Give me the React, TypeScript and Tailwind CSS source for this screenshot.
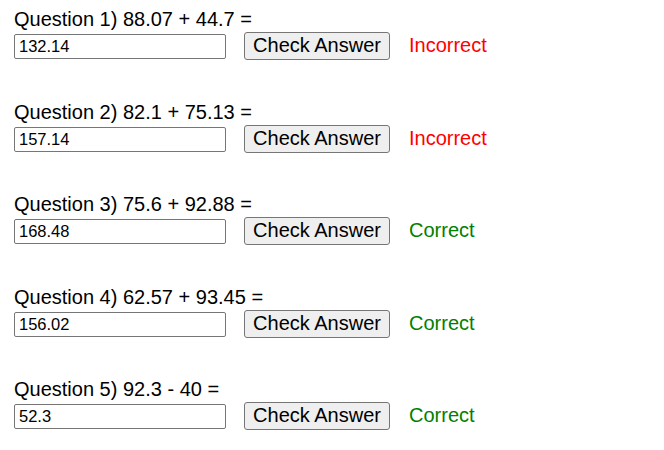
import React from "react";

const items = [
  { q: "Question 1) 88.07 + 44.7 =", a: "132.14", ok: false },
  { q: "Question 2) 82.1 + 75.13 =", a: "157.14", ok: false },
  { q: "Question 3) 75.6 + 92.88 =", a: "168.48", ok: true },
  { q: "Question 4) 62.57 + 93.45 =", a: "156.02", ok: true },
  { q: "Question 5) 92.3 - 40 =", a: "52.3", ok: true },
];

export default function App() {
  return (
    <div
      className="w-[664px] h-[450px] bg-white pt-[8px] pl-[14px] text-black"
      style={{ fontFamily: '"Liberation Sans", Arial, sans-serif' }}
    >
      {items.map((it, i) => (
        <div key={i} className="h-[92.5px] flex flex-col">
          <div className="text-[20px] leading-[23px] h-[23px]">{it.q}</div>
          <div className="flex items-start mt-[1px] h-[28px]">
            <input
              type="text"
              defaultValue={it.a}
              className="w-[212px] h-[25px] mt-[2px] border border-[#767676] rounded-[2px] px-[4px] text-[16.5px] leading-[23px] text-black bg-white outline-none"
              style={{ fontFamily: '"Liberation Sans", Arial, sans-serif' }}
            />
            <button
              className="ml-[18px] w-[146px] h-[28px] pb-[2px] bg-[#efefef] border border-[#767676] rounded-[3px] text-[20px] leading-[22px] text-black"
              style={{ fontFamily: '"Liberation Sans", Arial, sans-serif' }}
            >
              Check Answer
            </button>
            <span
              className={
                "ml-[19px] mt-[2px] text-[20px] leading-[23px] " +
                (it.ok ? "text-[#008000]" : "text-[#ff0000]")
              }
            >
              {it.ok ? "Correct" : "Incorrect"}
            </span>
          </div>
        </div>
      ))}
    </div>
  );
}
